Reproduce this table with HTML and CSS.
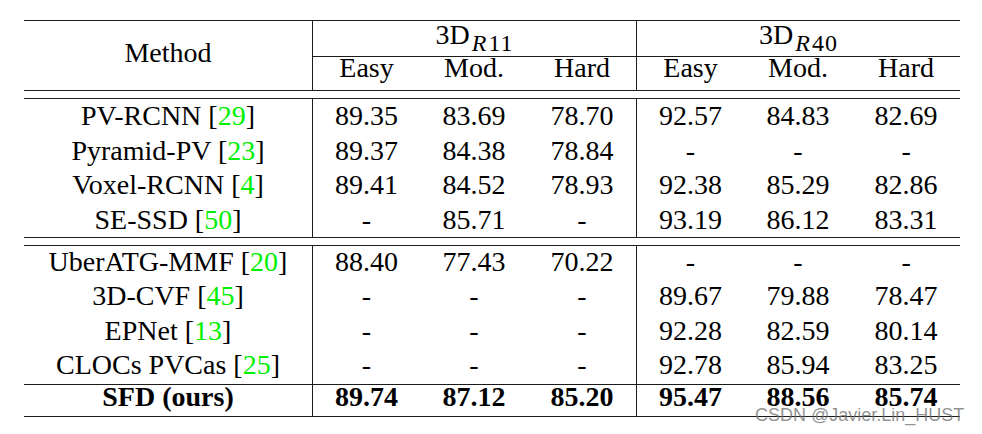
FILE: index.html
```html
<!DOCTYPE html>
<html lang="en">
<head>
	<meta charset="UTF-8">
	<title>3D detection results</title>
	<link rel="stylesheet" href="styles.css">
</head>
<body>
	<div class="page">
		<table class="results">
			<colgroup>
				<col class="c-method">
				<col><col><col>
				<col><col><col>
			</colgroup>
			<thead>
				<tr class="group">
					<th rowspan="2" class="method">Method</th>
					<th colspan="3" class="sep">3D<sub><i>R</i>11</sub></th>
					<th colspan="3" class="sep">3D<sub><i>R</i>40</sub></th>
				</tr>
				<tr class="level">
					<th class="sep">Easy</th>
					<th>Mod.</th>
					<th>Hard</th>
					<th class="sep">Easy</th>
					<th>Mod.</th>
					<th>Hard</th>
				</tr>
			</thead>
			<tbody>
				<tr class="gap first"><td colspan="7"></td></tr>
				<tr class="row a">
					<td>PV-RCNN [<span class="ref">29</span>]</td>
					<td>89.35</td><td>83.69</td><td>78.70</td>
					<td>92.57</td><td>84.83</td><td>82.69</td>
				</tr>
				<tr class="row a">
					<td>Pyramid-PV [<span class="ref">23</span>]</td>
					<td>89.37</td><td>84.38</td><td>78.84</td>
					<td>-</td><td>-</td><td>-</td>
				</tr>
				<tr class="row a">
					<td>Voxel-RCNN [<span class="ref">4</span>]</td>
					<td>89.41</td><td>84.52</td><td>78.93</td>
					<td>92.38</td><td>85.29</td><td>82.86</td>
				</tr>
				<tr class="row a">
					<td>SE-SSD [<span class="ref">50</span>]</td>
					<td>-</td><td>85.71</td><td>-</td>
					<td>93.19</td><td>86.12</td><td>83.31</td>
				</tr>
				<tr class="gap second"><td colspan="7"></td></tr>
				<tr class="row b">
					<td>UberATG-MMF [<span class="ref">20</span>]</td>
					<td>88.40</td><td>77.43</td><td>70.22</td>
					<td>-</td><td>-</td><td>-</td>
				</tr>
				<tr class="row b">
					<td>3D-CVF [<span class="ref">45</span>]</td>
					<td>-</td><td>-</td><td>-</td>
					<td>89.67</td><td>79.88</td><td>78.47</td>
				</tr>
				<tr class="row b">
					<td>EPNet [<span class="ref">13</span>]</td>
					<td>-</td><td>-</td><td>-</td>
					<td>92.28</td><td>82.59</td><td>80.14</td>
				</tr>
				<tr class="row b">
					<td>CLOCs PVCas [<span class="ref">25</span>]</td>
					<td>-</td><td>-</td><td>-</td>
					<td>92.78</td><td>85.94</td><td>83.25</td>
				</tr>
				<tr class="row ours">
					<td>SFD (ours)</td>
					<td>89.74</td><td>87.12</td><td>85.20</td>
					<td>95.47</td><td>88.56</td><td>85.74</td>
				</tr>
			</tbody>
		</table>
		<div class="mark">CSDN @Javier.Lin_HUST</div>
	</div>
</body>
</html>
```

FILE: styles.css
```css
*{
	margin: 0;
	padding: 0;
	box-sizing: border-box;
}
body{
	background: #fff;
	color: #000;
	font-family: "Liberation Serif", "Times New Roman", serif;
}
.page{
	position: relative;
	width: 982px;
	height: 434px;
	padding: 20px 0 0 24px;
}
.results{
	width: 936px;
	table-layout: fixed;
	border-collapse: separate;
	border-spacing: 0;
	border-top: 1px solid #1c1c1c;
	border-bottom: 1px solid #1c1c1c;
	font-size: 28px;
}
.results col{
	width: 108px;
}
.results col.c-method{
	width: 288px;
}
.results th,
.results td{
	font-weight: normal;
	text-align: center;
	vertical-align: top;
	line-height: 28px;
	white-space: nowrap;
}
.results .sep{
	border-left: 1px solid #1c1c1c;
}
/* header */
.group th{
	height: 36px;
	border-bottom: 1px solid #1c1c1c;
}
.group th.method{
	padding-top: 18px;
}
.group sub{
	font-size: 24px;
	line-height: 0;
	vertical-align: -7px;
	letter-spacing: 1px;
	margin-left: 2px;
}
.group sub i{
	margin-right: 1px;
}
.level th{
	height: 34px;
	line-height: 22px;
	border-bottom: 1px solid #1c1c1c;
}
/* double rules */
.gap td{
	padding: 0;
	border-bottom: 1px solid #1c1c1c;
}
.gap.first td{
	height: 8px;
}
.gap.second td{
	height: 9px;
	border-top: 1px solid #1c1c1c;
}
/* body rows */
.row td{
	height: 34.5px;
}
.row.a td{
	padding-top: 3px;
}
.row.b td{
	padding-top: 1.5px;
}
.row td:nth-child(2),
.row td:nth-child(5){
	border-left: 1px solid #1c1c1c;
}
.row.ours td{
	height: 32px;
	line-height: 24px;
	font-weight: bold;
	border-top: 1px solid #1c1c1c;
}
.ref{
	color: #00f000;
}
.mark{
	position: absolute;
	left: 755px;
	top: 405px;
	font-family: "Liberation Sans", Arial, sans-serif;
	font-size: 18px;
	color: rgba(110, 110, 110, 0.75);
	white-space: nowrap;
}
```
